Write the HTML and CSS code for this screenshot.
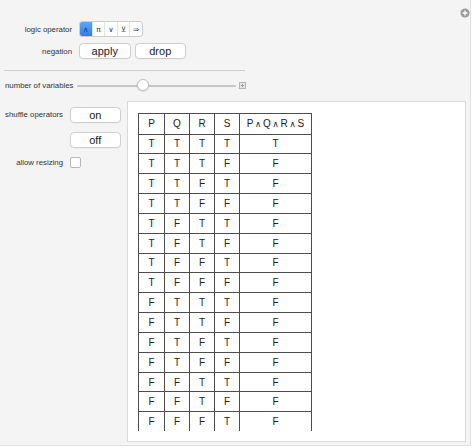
FILE: index.html
```html
<!DOCTYPE html>
<html>
<head>
<meta charset="utf-8">
<link rel="stylesheet" href="styles.css">
</head>
<body>
<div class="frame">
  <svg class="add-icon" width="10" height="10" viewBox="0 0 10 10"><circle cx="5" cy="5" r="4.6" fill="#9c9c9c"/><path d="M5 2.6v4.8M2.6 5h4.8" stroke="#fff" stroke-width="1.3"/></svg>
  <div class="ops">
    <div class="lbl">logic operator</div>
    <div class="seg">
      <span class="s on">∧</span><span class="s">π</span><span class="s">∨</span><span class="s">⊻</span><span class="s">⇒</span>
    </div>
    <div class="lbl">negation</div>
    <div class="btns">
      <button class="btn w52">apply</button><button class="btn w52">drop</button>
    </div>
  </div>
  <div class="divider"></div>
  <div class="slider-row">
    <div class="slbl">number of variables</div>
    <div class="track"><div class="thumb"></div></div>
    <svg class="mini" width="7" height="7" viewBox="0 0 7 7"><rect x="0.5" y="0.5" width="6" height="6" fill="#e8e8e8" stroke="#b5b5b5"/><path d="M3.5 1.8v3.4M1.8 3.5h3.4" stroke="#999" stroke-width="0.9"/></svg>
  </div>
  <div class="bottom">
    <div class="side">
      <div class="lbl2">shuffle operators</div>
      <button class="btn">on</button>
      <div></div>
      <button class="btn">off</button>
      <div class="lbl2">allow resizing</div>
      <div><span class="check"></span></div>
    </div>
    <div class="panel">
      <div class="clip">
        <table class="tt">
          <colgroup><col class="c1"><col class="c2"><col class="c3"><col class="c4"><col class="c5"></colgroup>
          <thead>
            <tr><th>P</th><th>Q</th><th>R</th><th>S</th><th class="expr">P <span class="op">∧</span> Q <span class="op">∧</span> R <span class="op">∧</span> S</th></tr>
          </thead>
          <tbody>
            <tr><td>T</td><td>T</td><td>T</td><td>T</td><td>T</td></tr>
            <tr><td>T</td><td>T</td><td>T</td><td>F</td><td>F</td></tr>
            <tr><td>T</td><td>T</td><td>F</td><td>T</td><td>F</td></tr>
            <tr><td>T</td><td>T</td><td>F</td><td>F</td><td>F</td></tr>
            <tr><td>T</td><td>F</td><td>T</td><td>T</td><td>F</td></tr>
            <tr><td>T</td><td>F</td><td>T</td><td>F</td><td>F</td></tr>
            <tr><td>T</td><td>F</td><td>F</td><td>T</td><td>F</td></tr>
            <tr><td>T</td><td>F</td><td>F</td><td>F</td><td>F</td></tr>
            <tr><td>F</td><td>T</td><td>T</td><td>T</td><td>F</td></tr>
            <tr><td>F</td><td>T</td><td>T</td><td>F</td><td>F</td></tr>
            <tr><td>F</td><td>T</td><td>F</td><td>T</td><td>F</td></tr>
            <tr><td>F</td><td>T</td><td>F</td><td>F</td><td>F</td></tr>
            <tr><td>F</td><td>F</td><td>T</td><td>T</td><td>F</td></tr>
            <tr><td>F</td><td>F</td><td>T</td><td>F</td><td>F</td></tr>
            <tr><td>F</td><td>F</td><td>F</td><td>T</td><td>F</td></tr>
          </tbody>
        </table>
      </div>
    </div>
  </div>
</div>
</body>
</html>
```

FILE: styles.css
```css
html, body {
  margin: 0;
  padding: 0;
  background: #ffffff;
}
.frame {
  position: relative;
  width: 471px;
  height: 446px;
  box-sizing: border-box;
  background: #f4f4f4;
  border-right: 1px solid #e1e1e1;
  border-bottom: 1px solid #e1e1e1;
  padding-top: 21px;
  font-family: "Liberation Sans", Arial, sans-serif;
  color: #2a2a2a;
}
.add-icon {
  position: absolute;
  left: 459.5px;
  top: 7.5px;
}
.ops {
  display: grid;
  grid-template-columns: 72px auto;
  grid-template-rows: 16px 16px;
  column-gap: 7px;
  row-gap: 6px;
}
.lbl, .lbl2 {
  font-size: 7.8px;
  text-align: right;
  display: flex;
  align-items: center;
  justify-content: flex-end;
  color: #333;
  white-space: nowrap;
}
.seg {
  display: flex;
  width: 64px;
  height: 16px;
  box-sizing: border-box;
  border: 1px solid #cdcdcd;
  border-radius: 3px;
  background: #fff;
  overflow: hidden;
}
.s {
  flex: 1;
  display: flex;
  align-items: center;
  justify-content: center;
  font-family: "DejaVu Sans", sans-serif;
  font-size: 7.5px;
  color: #444;
  border-left: 1px solid #e3e3e3;
}
.s:first-child {
  border-left: none;
}
.s.on {
  background: linear-gradient(#5aa7fb, #2a7ff0);
  color: #173a70;
}
.btns {
  display: flex;
  gap: 4px;
}
.btn {
  box-sizing: border-box;
  width: 51.5px;
  height: 16px;
  padding: 0;
  margin: 0;
  background: #fff;
  border: 1px solid #cfcfcf;
  border-radius: 4px;
  font-family: "Liberation Sans", Arial, sans-serif;
  font-size: 11px;
  color: #222;
  line-height: 14px;
  box-shadow: 0 0.5px 0.5px rgba(0,0,0,0.05);
}
.divider {
  margin: 11px 0 0 4px;
  width: 241px;
  height: 1px;
  background: #cfcfcf;
}
.slider-row {
  display: flex;
  align-items: center;
  height: 14px;
  margin-top: 7.5px;
}
.slbl {
  width: 72px;
  padding-left: 5px;
  box-sizing: border-box;
  font-size: 7.8px;
  color: #333;
  white-space: nowrap;
}
.track {
  position: relative;
  margin-left: 5px;
  width: 159px;
  height: 2px;
  border-radius: 1px;
  background: #c6c6c6;
}
.thumb {
  position: absolute;
  left: 59.5px;
  top: -5.5px;
  width: 12px;
  height: 12px;
  box-sizing: border-box;
  border-radius: 50%;
  background: #fff;
  border: 1px solid #c4c4c4;
  box-shadow: 0 0.5px 1.5px rgba(0,0,0,0.2);
}
.mini {
  margin-left: 3px;
}
.bottom {
  display: flex;
  margin-top: 8px;
}
.side {
  width: 126.5px;
  flex: none;
  display: grid;
  grid-template-columns: 63px 51.5px;
  grid-template-rows: 16px 16px 11px;
  column-gap: 6.5px;
  row-gap: 9px;
  align-content: start;
  padding-top: 6px;
  box-sizing: border-box;
}
.check {
  display: block;
  width: 11px;
  height: 11px;
  box-sizing: border-box;
  background: #fff;
  border: 1px solid #b9b9b9;
  border-radius: 2px;
}
.panel {
  width: 339px;
  height: 341px;
  box-sizing: border-box;
  background: #fff;
  border: 1px solid #d9d9d9;
  padding: 11px 10px 10px 10.5px;
}
.clip {
  height: 100%;
  overflow: hidden;
}
.tt {
  border-collapse: collapse;
  font-family: "Liberation Sans", Arial, sans-serif;
  font-size: 10px;
  color: #222;
  table-layout: fixed;
}
.c1 { width: 26px; }
.c2 { width: 25px; }
.c3 { width: 25px; }
.c4 { width: 25px; }
.c5 { width: 72px; }
.tt th, .tt td {
  border: 1px solid #4d4d4d;
  padding: 0;
  text-align: center;
  font-weight: normal;
}
.tt th {
  height: 20px;
}
.tt td {
  height: 18.85px;
}
.expr {
  word-spacing: -1px;
}
.op {
  font-family: "DejaVu Sans", sans-serif;
  font-size: 8.5px;
}
```
